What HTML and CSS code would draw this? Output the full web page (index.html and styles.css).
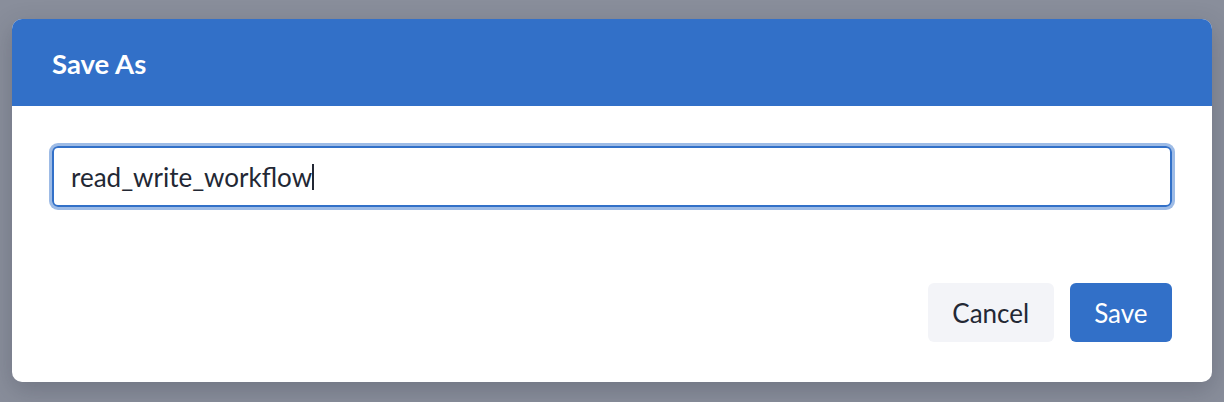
FILE: index.html
```html
<!DOCTYPE html>
<html lang="en">
<head>
<meta charset="utf-8">
<title>Save As</title>
<link rel="stylesheet" href="styles.css">
</head>
<body>
<div class="backdrop">
  <div class="dialog">
    <div class="dialog-header">
      <h1 class="dialog-title">Save As</h1>
    </div>
    <div class="dialog-body">
      <div class="field">
        <span class="field-text">read_write_workflow</span><span class="caret"></span>
      </div>
      <div class="dialog-footer">
        <button class="btn btn-secondary">Cancel</button>
        <button class="btn btn-primary">Save</button>
      </div>
    </div>
  </div>
</div>
</body>
</html>
```

FILE: styles.css
```css
html, body {
  margin: 0;
  padding: 0;
}
body {
  background: #898e9b;
  font-family: Lato, "Open Sans", sans-serif;
  width: 1224px;
  height: 402px;
  overflow: hidden;
}
.backdrop {
  padding: 19px 12px 0 12px;
}
.dialog {
  width: 1200px;
  background: #ffffff;
  border-radius: 10px;
  overflow: hidden;
  box-shadow: 0 8px 24px rgba(40, 44, 60, 0.25);
}
.dialog-header {
  background: #3270c8;
  height: 87px;
  display: flex;
  align-items: center;
  padding: 0 40px;
}
.dialog-title {
  margin: 0;
  color: #ffffff;
  font-size: 27.5px;
  font-weight: 700;
  padding-top: 2px;
}
.dialog-body {
  padding: 40px 40px 40px 40px;
}
.field {
  height: 61px;
  box-sizing: border-box;
  border: 2px solid #3270c8;
  border-radius: 6px;
  box-shadow: 0 0 0 3px #9dbbe6;
  display: flex;
  align-items: center;
  padding: 0 17px;
  font-size: 26px;
  color: #232834;
}
.caret {
  display: inline-block;
  width: 2px;
  height: 26px;
  background: #232834;
}
.dialog-footer {
  display: flex;
  justify-content: flex-end;
  gap: 16px;
  margin-top: 76px;
}
.btn {
  font-family: Lato, "Open Sans", sans-serif;
  font-size: 26px;
  height: 59px;
  border: none;
  border-radius: 6px;
  padding: 0 24.5px;
  cursor: pointer;
}
.btn-secondary {
  background: #f3f4f8;
  color: #232834;
}
.btn-primary {
  background: #3270c8;
  color: #ffffff;
}
```
